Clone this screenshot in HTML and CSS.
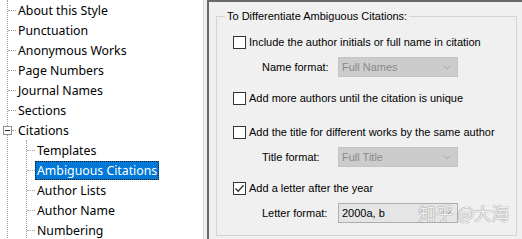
FILE: index.html
```html
<!DOCTYPE html>
<html lang="en">
<head>
    <meta charset="UTF-8">
    <meta name="viewport" content="width=device-width, initial-scale=1.0">
    <title>Ambiguous Citations</title>
    <link rel="stylesheet" href="styles.css">
</head>
<body>
    <div class="window">
        <div class="tree">
            <ul class="tree-root">
                <li><div class="node"><span class="label">About this Style</span></div></li>
                <li><div class="node"><span class="label">Punctuation</span></div></li>
                <li><div class="node"><span class="label">Anonymous Works</span></div></li>
                <li><div class="node"><span class="label">Page Numbers</span></div></li>
                <li><div class="node"><span class="label">Journal Names</span></div></li>
                <li><div class="node"><span class="label">Sections</span></div></li>
                <li>
                    <div class="node parent"><span class="expander"></span><span class="label">Citations</span></div>
                    <ul>
                        <li><div class="node"><span class="label">Templates</span></div></li>
                        <li><div class="node"><span class="label selected">Ambiguous Citations</span></div></li>
                        <li><div class="node"><span class="label">Author Lists</span></div></li>
                        <li><div class="node"><span class="label">Author Name</span></div></li>
                        <li><div class="node"><span class="label">Numbering</span></div></li>
                    </ul>
                </li>
            </ul>
        </div>

        <div class="pane">
            <fieldset class="group">
                <legend>To Differentiate Ambiguous Citations:</legend>
                <div class="options">
                    <div class="option">
                        <label class="check"><span class="box"></span>Include the author initials or full name in citation</label>
                        <div class="field">
                            <span class="field-label">Name format:</span>
                            <div class="select disabled">Full Names<svg class="chevron" width="8" height="5" viewBox="0 0 8 5"><polyline points="0.5,0.5 4,4 7.5,0.5"/></svg></div>
                        </div>
                    </div>
                    <div class="option single">
                        <label class="check"><span class="box"></span>Add more authors until the citation is unique</label>
                    </div>
                    <div class="option">
                        <label class="check"><span class="box"></span>Add the title for different works by the same author</label>
                        <div class="field">
                            <span class="field-label">Title format:</span>
                            <div class="select disabled">Full Title<svg class="chevron" width="8" height="5" viewBox="0 0 8 5"><polyline points="0.5,0.5 4,4 7.5,0.5"/></svg></div>
                        </div>
                    </div>
                    <div class="option">
                        <label class="check"><span class="box checked"><svg width="11" height="11" viewBox="0 0 11 11"><polyline points="1.5,5.5 4.2,8.3 9.5,2.2"/></svg></span>Add a letter after the year</label>
                        <div class="field">
                            <span class="field-label">Letter format:</span>
                            <div class="select">2000a, b<svg class="chevron" width="8" height="5" viewBox="0 0 8 5"><polyline points="0.5,0.5 4,4 7.5,0.5"/></svg></div>
                        </div>
                    </div>
                </div>
            </fieldset>
        </div>

        <div class="watermark">知乎 @大海</div>
    </div>
</body>
</html>
```

FILE: styles.css
```css
body {
    margin: 0;
    background-color: #f0f0f0;
    font-family: "Liberation Sans", Arial, sans-serif;
    color: #000;
}

.window {
    position: relative;
    display: flex;
    height: 239px;
    overflow: hidden;
}

/* left tree */
.tree {
    width: 203px;
    flex-shrink: 0;
    background-color: #fff;
    border-right: 1px solid #dadada;
    font-family: "Noto Sans", sans-serif;
    font-size: 12.3px;
}

.tree ul {
    list-style: none;
    margin: 0;
    padding: 0;
    border-left: 1px dotted #a0a0a0;
}

.tree-root {
    margin-left: 7px !important;
}

.tree ul ul {
    margin-left: 18px;
}

.node {
    display: flex;
    align-items: center;
    height: 20px;
}

.node::before {
    content: "";
    order: 1;
    width: 8px;
    border-top: 1px dotted #a0a0a0;
}

.node.parent::before {
    width: 4px;
}

.label {
    order: 2;
    padding: 0 1px;
    border: 1px dotted transparent;
    line-height: 17px;
    white-space: nowrap;
}

.label.selected {
    background-color: #0078d7;
    border-color: #1a1a1a;
    color: #fff;
}

.expander {
    order: 0;
    width: 9px;
    height: 9px;
    box-sizing: border-box;
    margin-left: -5px;
    border: 1px solid #919191;
    background-color: #fff;
    display: flex;
    align-items: center;
    justify-content: center;
}

.expander::after {
    content: "";
    width: 5px;
    height: 1px;
    background-color: #222;
}

/* right pane */
.pane {
    flex: 1;
    margin-left: 3px;
    border-left: 2px solid #696969;
    border-top: 2px solid #696969;
    padding: 7px 5px 3px 7px;
    font-size: 11px;
}

.group {
    margin: 0;
    min-width: 0;
    border: 1px solid #d5d5d5;
    padding: 12px 10px 12px 16px;
}

.group legend {
    padding: 0 2px;
    margin-left: -8px;
    line-height: 14px;
}

.options {
    display: flex;
    flex-direction: column;
    gap: 14px;
}

.option.single {
    min-height: 20px;
}

.check {
    display: flex;
    align-items: center;
    height: 14px;
    line-height: 14px;
    white-space: nowrap;
}

.box {
    width: 13px;
    height: 13px;
    box-sizing: border-box;
    border: 1px solid #333;
    background-color: #fff;
    margin-right: 3px;
    display: flex;
    align-items: center;
    justify-content: center;
}

.box svg polyline {
    fill: none;
    stroke: #333;
    stroke-width: 1.3;
}

.field {
    display: flex;
    align-items: center;
    margin-top: 8px;
    padding-left: 29px;
}

.field-label {
    width: 76px;
}

.select {
    display: flex;
    align-items: center;
    width: 120px;
    height: 20px;
    box-sizing: border-box;
    padding-left: 3px;
    border: 1px solid #adadad;
    background-color: #e5e5e5;
}

.select.disabled {
    border-color: #c4c4c4;
    background-color: #cccccc;
    color: #8a8a8a;
}

.chevron {
    margin-left: auto;
    margin-right: 6px;
}

.chevron polyline {
    fill: none;
    stroke: #444;
    stroke-width: 1;
}

.select.disabled .chevron polyline {
    stroke: #a8a8a8;
}

.watermark {
    position: absolute;
    right: 13px;
    top: 201px;
    font-family: "Noto Sans CJK SC", sans-serif;
    font-size: 17.5px;
    line-height: 24px;
    color: rgba(255, 255, 255, 0.9);
    text-shadow: 0 0 1px #8c8c8c, 0 0 1px #8c8c8c;
}
```
